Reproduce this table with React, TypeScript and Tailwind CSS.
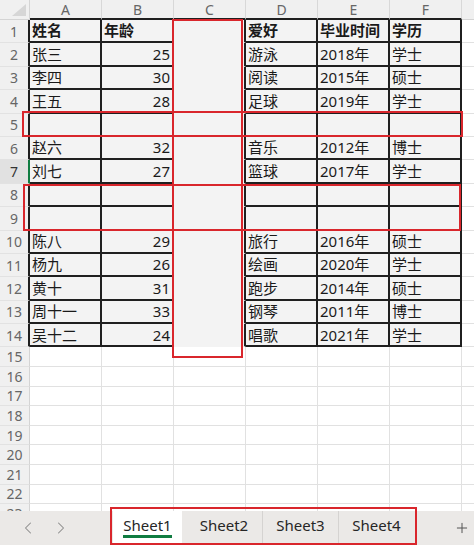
import React from 'react';
import { ChevronLeft, ChevronRight, Plus } from 'lucide-react';

type Cell = string | number | null;

const cols = ['A', 'B', 'C', 'D', 'E', 'F'];

// rows 1..14 of the table, column C left empty on purpose
const data: Cell[][] = [
  ['姓名', '年龄', null, '爱好', '毕业时间', '学历'],
  ['张三', 25, null, '游泳', '2018年', '学士'],
  ['李四', 30, null, '阅读', '2015年', '硕士'],
  ['王五', 28, null, '足球', '2019年', '学士'],
  [null, null, null, null, null, null],
  ['赵六', 32, null, '音乐', '2012年', '博士'],
  ['刘七', 27, null, '篮球', '2017年', '学士'],
  [null, null, null, null, null, null],
  [null, null, null, null, null, null],
  ['陈八', 29, null, '旅行', '2016年', '硕士'],
  ['杨九', 26, null, '绘画', '2020年', '学士'],
  ['黄十', 31, null, '跑步', '2014年', '硕士'],
  ['周十一', 33, null, '钢琴', '2011年', '博士'],
  ['吴十二', 24, null, '唱歌', '2021年', '学士'],
];

const rowNums = Array.from({ length: 23 }, (_, i) => i + 1);

const RowHeader: React.FC<{ n: number; tall: boolean }> = ({ n, tall }) => {
  let cls = 'w-[30px] shrink-0 flex items-center justify-center text-[14px] border-b border-b-[#e2e2e2] ';
  if (n === 7) cls += 'bg-[#e1e1e1] text-[#333] border-r-2 border-r-[#107c41]';
  else if (tall) cls += 'bg-[#f0f0f0] text-[#666] border-r-2 border-r-[#1f1f1f]';
  else cls += 'bg-[#f0f0f0] text-[#666] border-r border-r-[#d4d4d4]';
  return <div className={cls}>{n}</div>;
};

const DataCell: React.FC<{ value: Cell; col: number; row: number; tall: boolean }> = ({ value, col, row, tall }) => {
  let cls = 'w-[72px] shrink-0 flex items-center text-[15px] text-[#1a1a1a] ';
  if (!tall) cls += 'bg-white border-r border-b border-[#e1e1e1]';
  else if (col === 2) cls += 'bg-[#f3f3f3] border-r-2 border-r-[#1f1f1f] border-b border-b-transparent';
  else cls += 'bg-[#f3f3f3] border-r-2 border-b-2 border-[#1f1f1f]';
  if (typeof value === 'number') cls += ' justify-end pr-[2px]';
  else cls += ' pl-[2px]';
  if (row === 1) cls += ' font-bold';
  return <div className={cls}>{value}</div>;
};

export default function App() {
  return (
    <div className="relative w-[474px] h-[545px] overflow-hidden flex flex-col bg-white font-['Noto_Sans','Noto_Sans_CJK_SC',sans-serif]">
      {/* sheet grid */}
      <div className="flex-1 overflow-hidden">
        {/* column headers */}
        <div className="flex h-[20px]">
          <div className="w-[30px] shrink-0 bg-[#f0f0f0] border-r border-b border-[#d4d4d4] flex items-end justify-end pr-[3px] pb-[3px]">
            <svg width="14" height="12" viewBox="0 0 14 12">
              <polygon points="14,0 14,12 0,12" fill="#d6d6d6" />
            </svg>
          </div>
          {cols.map((c) => (
            <div
              key={c}
              className="w-[72px] shrink-0 bg-[#f0f0f0] border-r border-r-[#d8d8d8] border-b-2 border-b-[#1f1f1f] flex items-center justify-center text-[14px] text-[#666]"
            >
              {c}
            </div>
          ))}
          <div className="flex-1 bg-[#f0f0f0] border-b border-[#d4d4d4]"></div>
        </div>

        {rowNums.map((n) => {
          const tall = n <= 14;
          const row = data[n - 1] || [null, null, null, null, null, null];
          return (
            <div key={n} className={tall ? 'flex h-[23.4px]' : 'flex h-[19.6px]'}>
              <RowHeader n={n} tall={tall} />
              {row.map((v, i) => (
                <DataCell key={i} value={v} col={i} row={n} tall={tall} />
              ))}
              <div className="flex-1 bg-white border-b border-[#e1e1e1]"></div>
            </div>
          );
        })}
      </div>

      {/* sheet tabs */}
      <div className="h-[34px] shrink-0 flex bg-[#ebe9e7] text-[15px] text-[#262626]">
        <div className="w-[113px] shrink-0 flex items-center text-[#8a8a8a]">
          <ChevronLeft size={20} strokeWidth={1.25} className="ml-[18px]" />
          <ChevronRight size={20} strokeWidth={1.25} className="ml-[13px]" />
        </div>
        <div className="w-[69px] shrink-0 mb-[2px] bg-white flex justify-center pt-[5px]">
          <span className="h-fit leading-[18px] pb-[1px] border-b-[3px] border-[#107c41]">Sheet1</span>
        </div>
        <div className="w-[4px] shrink-0"></div>
        <div className="w-[76px] shrink-0 flex justify-center pt-[5px]">
          <span className="leading-[18px]">Sheet2</span>
        </div>
        <div className="w-[76px] shrink-0 flex justify-center pt-[5px] border-l border-[#d5d3d1]">
          <span className="leading-[18px]">Sheet3</span>
        </div>
        <div className="w-[76px] shrink-0 flex justify-center pt-[5px] border-l border-[#d5d3d1]">
          <span className="leading-[18px]">Sheet4</span>
        </div>
        <div className="flex-1 flex items-center justify-end pr-[4px] text-[#555]">
          <Plus size={16} strokeWidth={1.5} />
        </div>
      </div>

      {/* red annotation boxes */}
      <div className="absolute left-[172px] top-[19px] w-[71px] h-[339px] border-2 border-[#d9262c]"></div>
      <div className="absolute left-[22px] top-[111px] w-[441px] h-[26px] border-2 border-[#d9262c]"></div>
      <div className="absolute left-[23px] top-[184px] w-[438px] h-[47px] border-2 border-[#d9262c]"></div>
      <div className="absolute left-[110px] top-[507px] w-[307px] h-[38px] border-2 border-[#d9262c]"></div>
    </div>
  );
}
